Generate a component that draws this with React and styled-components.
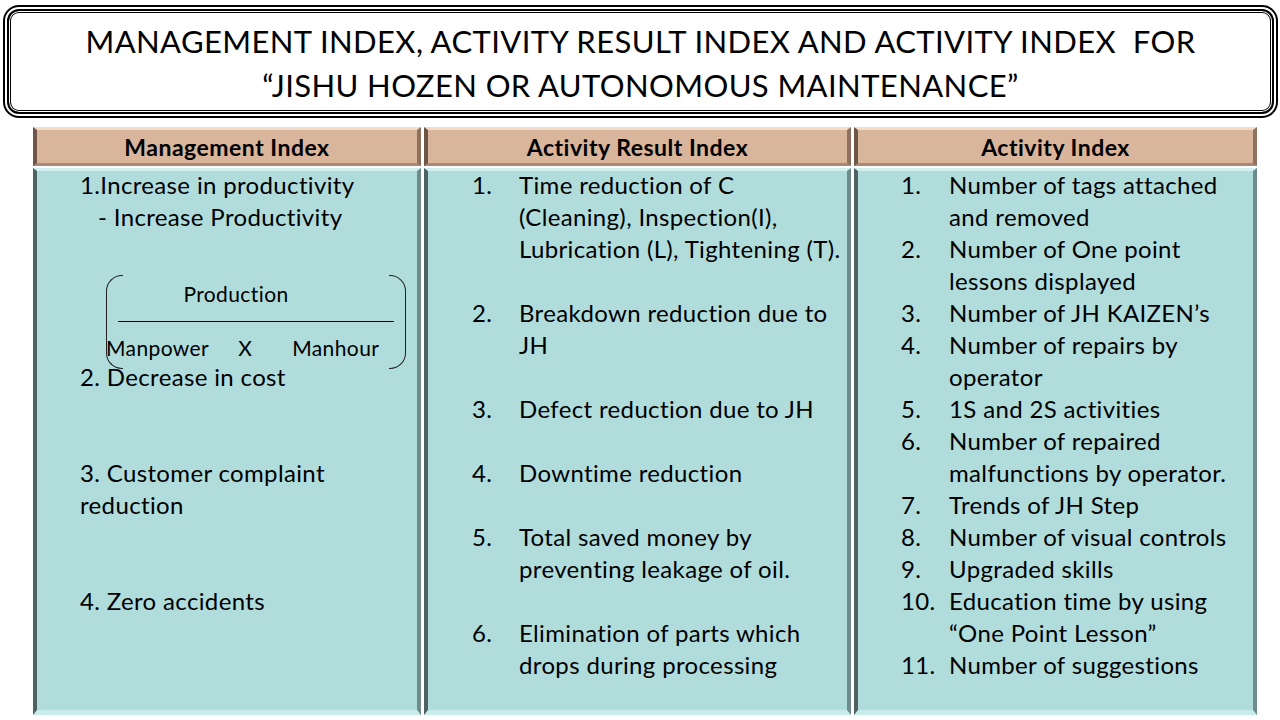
import React from "react";
import styled, { createGlobalStyle } from "styled-components";

const GlobalStyle = createGlobalStyle`
  html, body {
    margin: 0;
    padding: 0;
    background: #ffffff;
  }
  body {
    font-family: Lato, "Open Sans", "Liberation Sans", sans-serif;
    color: #000;
  }
`;

const Page = styled.div`
  width: 1280px;
  height: 720px;
  overflow: hidden;
  padding: 5px 2px 0 3px;
  box-sizing: border-box;
`;

const TitleBox = styled.div`
  height: 113px;
  box-sizing: border-box;
  border: 6px double #000;
  border-radius: 16px;
  box-shadow: inset 0 0 0 1px #fff, inset 0 0 0 2px #000;
  display: flex;
  flex-direction: column;
  align-items: center;
  justify-content: center;
  font-size: 31px;
  line-height: 44px;
  letter-spacing: 0.4px;
  white-space: pre;
  padding-top: 2px;
`;

const Table = styled.div`
  display: grid;
  grid-template-columns: 388px 427px 403px;
  grid-template-rows: 39px 547px;
  column-gap: 3px;
  row-gap: 2px;
  margin: 9px 0 0 30px;
`;

const Head = styled.div`
  background: #d9b59b;
  box-sizing: border-box;
  border-style: solid;
  border-width: 3px 4px 3px 4px;
  border-color: #f1dccb #8f7160 #a98a76 #6d5547;
  display: flex;
  align-items: center;
  justify-content: center;
  font-weight: 700;
  font-size: 23px;
  letter-spacing: 0.5px;
  padding-top: 1px;
`;

const Body = styled.div`
  background: #b0dcdc;
  box-sizing: border-box;
  border-style: solid;
  border-width: 3px 4px 5px 4px;
  border-color: #d2f0f0 #6e8c8c #c8ecec #4f6262;
  padding: 0 0 0 ${(p) => p.$left}px;
  font-size: 24px;
  line-height: 32px;
  letter-spacing: 0.35px;
  white-space: nowrap;

  & > :first-child {
    margin-top: -2px;
  }
`;

const Line = styled.div`
  padding-left: ${(p) => p.$indent || 0}px;
  margin-top: ${(p) => p.$gap || 0}px;
`;

const Fraction = styled.div`
  position: relative;
  width: 300px;
  height: 94px;
  margin: 42px 0 -8px 69px;
  font-size: 21px;
  letter-spacing: 0.4px;

  &::before,
  &::after {
    content: "";
    position: absolute;
    top: 0;
    bottom: 0;
    width: 16px;
    border: 1px solid #222;
  }
  &::before {
    left: 0;
    border-right: none;
    border-radius: 16px 0 0 16px;
  }
  &::after {
    right: 0;
    border-left: none;
    border-radius: 0 16px 16px 0;
  }
`;

const FracTop = styled.div`
  text-align: center;
  line-height: 24px;
  padding-top: 7px;
  padding-right: 40px;
`;

const FracRule = styled.div`
  height: 1px;
  background: #000;
  margin: 15px 12px 0 12px;
`;

const FracBottom = styled.div`
  display: flex;
  line-height: 24px;
  margin-top: 14px;

  & > span:nth-child(2) {
    margin: 0 40px 0 29px;
  }
`;

const Item = styled.div`
  display: flex;
  margin-bottom: ${(p) => (p.$spaced ? 32 : 0)}px;
`;

const Num = styled.div`
  width: ${(p) => p.$w}px;
  flex: none;
`;

const management = (
  <>
    <Line $indent={43}>1.Increase in productivity</Line>
    <Line $indent={61}>- Increase Productivity</Line>
    <Fraction>
      <FracTop>Production</FracTop>
      <FracRule />
      <FracBottom>
        <span>Manpower</span>
        <span>X</span>
        <span>Manhour</span>
      </FracBottom>
    </Fraction>
    <Line $indent={43}>2. Decrease in cost</Line>
    <Line $indent={43} $gap={64}>
      3. Customer complaint
    </Line>
    <Line $indent={43}>reduction</Line>
    <Line $indent={43} $gap={64}>
      4. Zero accidents
    </Line>
  </>
);

const results = [
  ["Time reduction of C", "(Cleaning), Inspection(I),", "Lubrication (L), Tightening (T)."],
  ["Breakdown reduction due to", "JH"],
  ["Defect reduction due to JH"],
  ["Downtime reduction"],
  ["Total saved money by", "preventing leakage of oil."],
  ["Elimination of parts which", "drops during processing"],
];

const activities = [
  ["Number of tags attached", "and removed"],
  ["Number of One point", "lessons displayed"],
  ["Number of JH KAIZEN\u2019s"],
  ["Number of repairs by", "operator"],
  ["1S and 2S activities"],
  ["Number of repaired", "malfunctions by operator."],
  ["Trends of JH Step"],
  ["Number of visual controls"],
  ["Upgraded skills"],
  ["Education time by using", "\u201COne Point Lesson\u201D"],
  ["Number of suggestions"],
];

const NumberedList = ({ items, numWidth, spaced }) =>
  items.map((lines, i) => (
    <Item key={i} $spaced={spaced}>
      <Num $w={numWidth}>{i + 1}.</Num>
      <div>
        {lines.map((l, j) => (
          <div key={j}>{l}</div>
        ))}
      </div>
    </Item>
  ));

export default function App() {
  return (
    <>
      <GlobalStyle />
      <Page>
        <TitleBox>
          <div>MANAGEMENT INDEX, ACTIVITY RESULT INDEX AND ACTIVITY INDEX  FOR</div>
          <div>{"\u201CJISHU HOZEN OR AUTONOMOUS MAINTENANCE\u201D"}</div>
        </TitleBox>
        <Table>
          <Head>Management Index</Head>
          <Head>Activity Result Index</Head>
          <Head>Activity Index</Head>
          <Body $left={0}>{management}</Body>
          <Body $left={44}>
            <NumberedList items={results} numWidth={47} spaced />
          </Body>
          <Body $left={43}>
            <NumberedList items={activities} numWidth={48} />
          </Body>
        </Table>
      </Page>
    </>
  );
}
